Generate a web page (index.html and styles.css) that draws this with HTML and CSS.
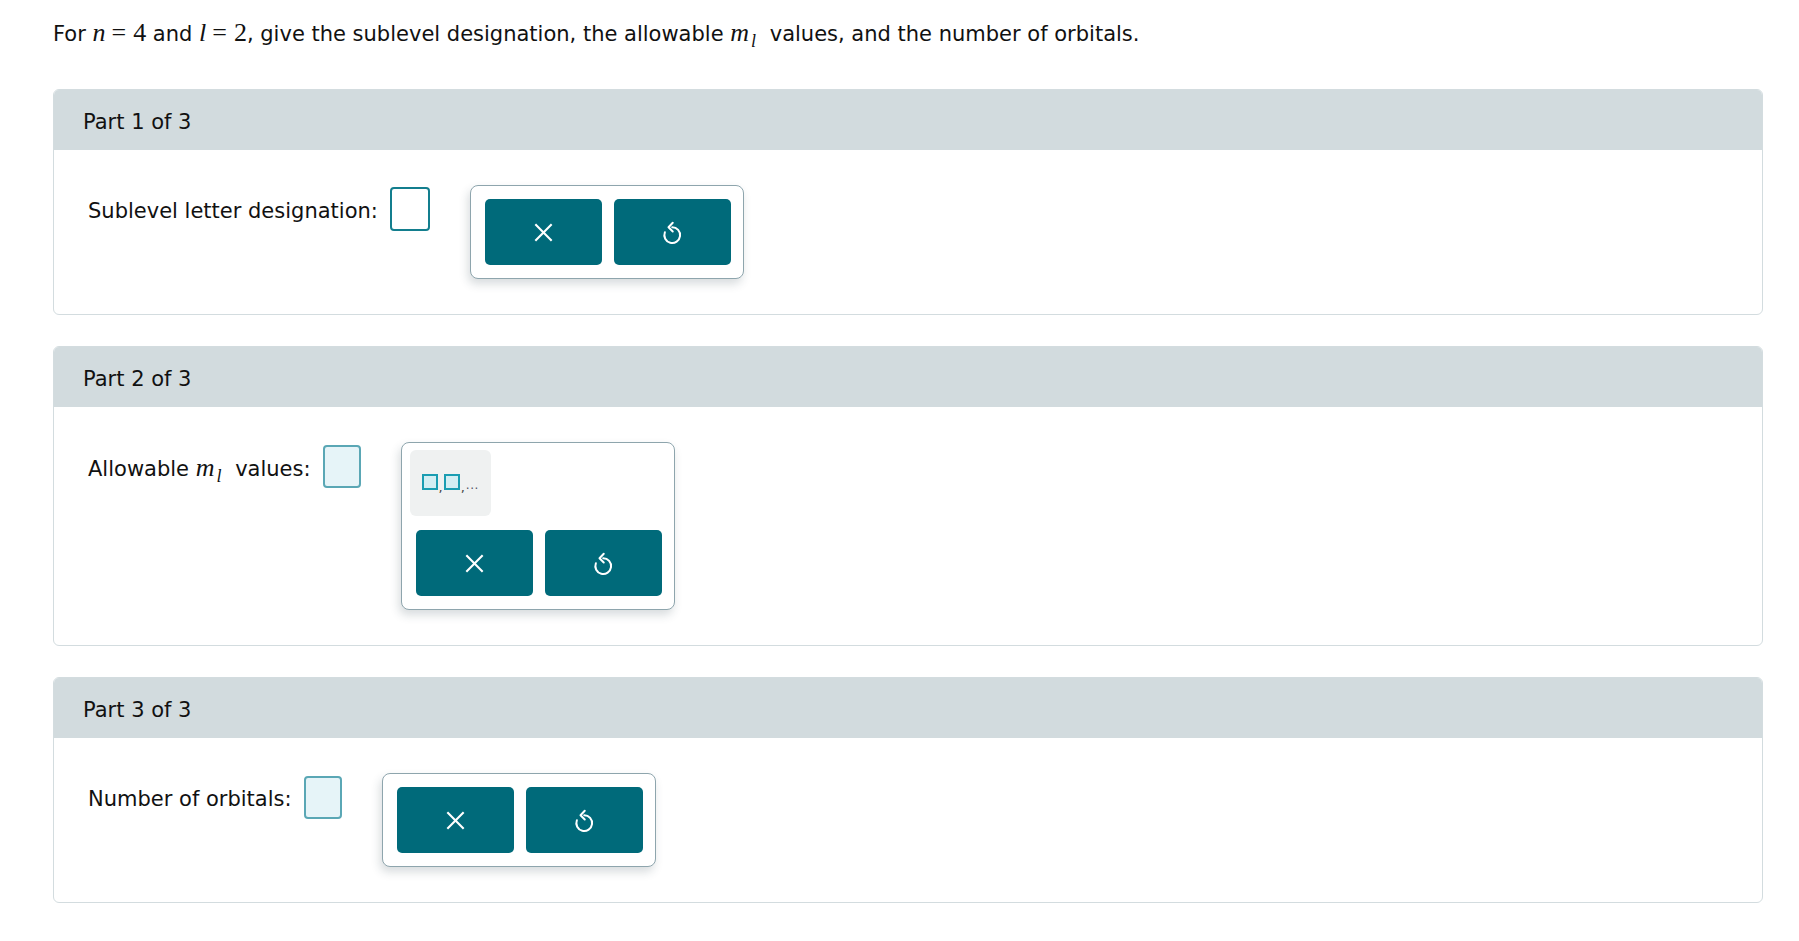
FILE: index.html
```html
<!DOCTYPE html>
<html>
<head>
<meta charset="utf-8">
<link rel="stylesheet" href="styles.css">
</head>
<body>
<p class="question">For <span class="math"><i>n</i><span class="op">=</span>4</span> and <span class="math"><i>l</i><span class="op">=</span>2</span>, give the sublevel designation, the allowable <span class="math"><i>m</i><sub><i>l</i></sub></span> values, and the number of orbitals.</p>

<section class="panel">
  <div class="panel-head">Part 1 of 3</div>
  <div class="panel-body">
    <div class="field">
      <span class="label">Sublevel letter designation:</span>
      <span class="box box-active"></span>
    </div>
    <div class="toolbar">
      <div class="btn-row">
        <button class="tbtn" type="button"><svg class="ic-x" viewBox="0 0 18 18"><path d="M2 2L16 16M16 2L2 16"/></svg></button>
        <button class="tbtn" type="button"><svg class="ic-undo" viewBox="0 0 16 20"><path d="M8.2 5.8A6.3 6.3 0 1 1 2.3 9.8"/><path d="M8.6 2.2L5.2 5.8L8.6 9.2"/></svg></button>
      </div>
    </div>
  </div>
</section>

<section class="panel">
  <div class="panel-head">Part 2 of 3</div>
  <div class="panel-body">
    <div class="field">
      <span class="label">Allowable <span class="math"><i>m</i><sub><i>l</i></sub></span> values:</span>
      <span class="box"></span>
    </div>
    <div class="toolbar toolbar-tall">
      <div class="palette">
        <span class="sq"></span><span class="cm">,</span><span class="sq"></span><span class="cm">,</span><span class="dots">...</span>
      </div>
      <div class="btn-row">
        <button class="tbtn" type="button"><svg class="ic-x" viewBox="0 0 18 18"><path d="M2 2L16 16M16 2L2 16"/></svg></button>
        <button class="tbtn" type="button"><svg class="ic-undo" viewBox="0 0 16 20"><path d="M8.2 5.8A6.3 6.3 0 1 1 2.3 9.8"/><path d="M8.6 2.2L5.2 5.8L8.6 9.2"/></svg></button>
      </div>
    </div>
  </div>
</section>

<section class="panel">
  <div class="panel-head">Part 3 of 3</div>
  <div class="panel-body">
    <div class="field">
      <span class="label">Number of orbitals:</span>
      <span class="box"></span>
    </div>
    <div class="toolbar">
      <div class="btn-row">
        <button class="tbtn" type="button"><svg class="ic-x" viewBox="0 0 18 18"><path d="M2 2L16 16M16 2L2 16"/></svg></button>
        <button class="tbtn" type="button"><svg class="ic-undo" viewBox="0 0 16 20"><path d="M8.2 5.8A6.3 6.3 0 1 1 2.3 9.8"/><path d="M8.6 2.2L5.2 5.8L8.6 9.2"/></svg></button>
      </div>
    </div>
  </div>
</section>
</body>
</html>
```

FILE: styles.css
```css
* { box-sizing: border-box; }

body {
  margin: 0;
  background: #ffffff;
  color: #111111;
  font-family: "DejaVu Sans", Verdana, sans-serif;
  font-size: 21px;
}

.question {
  margin: 20px 0 0 53px;
  line-height: 24px;
  height: 24px;
}

.math {
  font-family: "Liberation Serif", "Times New Roman", serif;
  font-size: 26px;
  line-height: 1;
}
.math i { font-style: italic; }
.math .op { margin: 0 7px 0 6px; }
.math sub {
  font-size: 18px;
  vertical-align: -6px;
  line-height: 0;
  margin-left: 2px;
  margin-right: 7px;
}

.panel {
  margin: 45px 36px 0 53px;
  border: 1px solid #d3dcdf;
  border-radius: 6px;
  overflow: hidden;
  background: #ffffff;
}
.panel + .panel { margin-top: 31px; }

.panel-head {
  height: 60px;
  background: #d2dbde;
  display: flex;
  align-items: center;
  padding-left: 29px;
  padding-top: 3px;
}

.panel-body {
  display: flex;
  align-items: flex-start;
  padding: 35px 0 35px 34px;
}

.field {
  display: flex;
  align-items: center;
  margin-top: 2px;
  height: 44px;
}

.label {
  white-space: nowrap;
  padding-top: 4px;
}

.box {
  display: inline-block;
  width: 38px;
  height: 43px;
  margin-left: 12px;
  border: 2px solid #5aa7b5;
  background: #e6f4f8;
  border-radius: 4px;
}
.box-active {
  width: 40px;
  height: 44px;
  border: 2px solid #137e8e;
  background: #ffffff;
}

.toolbar {
  margin-left: 40px;
  border: 1px solid #8ea5ad;
  border-radius: 8px;
  background: #ffffff;
  padding: 13px 12px 13px 14px;
  box-shadow: -2px 5px 10px rgba(40, 60, 70, 0.18);
  display: flex;
  flex-direction: column;
}
.toolbar-tall { padding-top: 7px; }

.btn-row {
  display: flex;
  gap: 12px;
}

.tbtn {
  width: 117px;
  height: 66px;
  border: none;
  border-radius: 5px;
  background: #006a7a;
  display: flex;
  align-items: center;
  justify-content: center;
  padding: 0;
}

.ic-x {
  width: 21px;
  height: 21px;
  fill: none;
  stroke: #ffffff;
  stroke-width: 1.8;
}
.ic-undo {
  width: 20px;
  height: 25px;
  fill: none;
  stroke: #ffffff;
  stroke-width: 1.6;
  stroke-linecap: round;
  stroke-linejoin: round;
}

.palette {
  width: 81px;
  height: 66px;
  margin-left: -6px;
  margin-bottom: 14px;
  background: #eff1f1;
  border-radius: 6px;
  display: flex;
  align-items: center;
  padding-left: 12px;
  padding-bottom: 2px;
}
.sq {
  width: 16px;
  height: 16px;
  border: 2px solid #1a9db2;
  background: #d3eef3;
}
.cm {
  font-size: 13px;
  color: #444;
  margin: 10px 1px 0 1px;
}
.dots {
  font-size: 12px;
  color: #556;
  letter-spacing: 0.5px;
  margin-top: 6px;
}
```
